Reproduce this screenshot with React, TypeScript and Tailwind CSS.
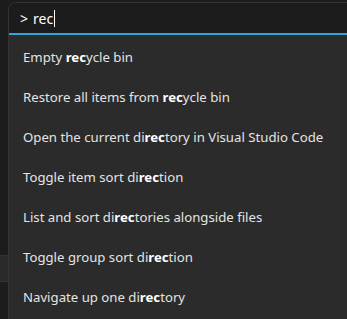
import React from "react";

const items: [string, string, string][] = [
  ["Empty ", "rec", "ycle bin"],
  ["Restore all items from ", "rec", "ycle bin"],
  ["Open the current di", "rec", "tory in Visual Studio Code"],
  ["Toggle item sort di", "rec", "tion"],
  ["List and sort di", "rec", "tories alongside files"],
  ["Toggle group sort di", "rec", "tion"],
  ["Navigate up one di", "rec", "tory"],
];

export default function App() {
  return (
    <div
      className="relative w-[347px] h-[319px] overflow-hidden bg-[#1c1c1c] text-[#e6e6e6]"
      style={{ fontFamily: '"Segoe UI", "Noto Sans", sans-serif' }}
    >
      {/* strip of the window behind */}
      <div className="absolute left-0 top-[255px] w-[8px] h-[27px] bg-[#2a2a2a] border-y border-[#333]" />
      <div className="absolute left-[8px] top-[2px] right-0 bottom-0 rounded-tl-[8px] border-l border-t border-[#333] overflow-hidden flex flex-col">
        <div className="h-[30px] bg-[#1c1c1c] flex items-center pl-[11px] text-[14px] text-white">
          <span className="mr-[5px]">&gt;</span>
          <span>rec</span>
          <span className="w-px h-[17px] bg-white ml-px" />
        </div>
        <div className="h-[2px] bg-[#2ea6df]" />
        <div className="flex-1 bg-[#2b2b2b] flex flex-col pt-[3px]">
          {items.map(([a, b, c]) => (
            <div key={a + c} className="h-[40px] flex items-center pl-[14px] text-[13.2px] text-[#e4e4e4] whitespace-pre">
              <span>
                {a}
                <b className="font-bold text-white">{b}</b>
                {c}
              </span>
            </div>
          ))}
        </div>
      </div>
    </div>
  );
}
